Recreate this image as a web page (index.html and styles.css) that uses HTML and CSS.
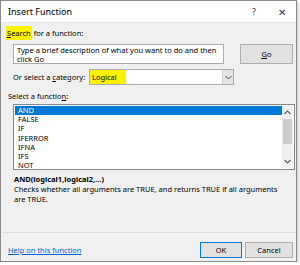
FILE: index.html
```html
<!DOCTYPE html>
<html lang="en">
<head>
    <meta charset="UTF-8">
    <title>Insert Function</title>
    <link rel="stylesheet" href="styles.css">
</head>
<body>

<div class="dialog">
    <div class="titlebar">
        <span class="title">Insert Function</span>
        <span class="tb-btn help">?</span>
        <span class="tb-btn close">&#x2715;</span>
    </div>

    <div class="body">
        <div class="label search-label"><span class="hl"><u>S</u>earch</span> for a function:</div>

        <div class="search-row">
            <div class="search-box">Type a brief description of what you want to do and then click Go</div>
            <button class="btn go"><u>G</u>o</button>
        </div>

        <div class="cat-row">
            <span class="label">Or select a <u>c</u>ategory:</span>
            <div class="combo">
                <span class="combo-value">Logical</span>
                <span class="combo-arrow">
                    <svg width="7" height="5" viewBox="0 0 7 5"><path d="M0.5 1 L3.5 4 L6.5 1" fill="none" stroke="#555" stroke-width="1"/></svg>
                </span>
            </div>
        </div>

        <div class="label list-label">Select a functio<u>n</u>:</div>

        <div class="listbox">
            <ul class="items">
                <li class="selected">AND</li>
                <li>FALSE</li>
                <li>IF</li>
                <li>IFERROR</li>
                <li>IFNA</li>
                <li>IFS</li>
                <li>NOT</li>
            </ul>
            <div class="scrollbar">
                <svg class="sb-arrow" width="7" height="5" viewBox="0 0 7 5"><path d="M0.5 4 L3.5 1 L6.5 4" fill="none" stroke="#606060" stroke-width="1.2"/></svg>
                <div class="sb-track"><div class="sb-thumb"></div></div>
                <svg class="sb-arrow" width="7" height="5" viewBox="0 0 7 5"><path d="M0.5 1 L3.5 4 L6.5 1" fill="none" stroke="#606060" stroke-width="1.2"/></svg>
            </div>
        </div>

        <div class="desc">
            <div class="syntax">AND(logical1,logical2,...)</div>
            <p>Checks whether all arguments are TRUE, and returns TRUE if all arguments are TRUE.</p>
        </div>

        <div class="footer">
            <a class="help-link" href="#">Help on this function</a>
            <div class="buttons">
                <button class="btn ok">OK</button>
                <button class="btn">Cancel</button>
            </div>
        </div>
    </div>
</div>

</body>
</html>
```

FILE: styles.css
```css
* {
    margin: 0;
    padding: 0;
    box-sizing: border-box;
}
body {
    background: #fff;
    font-family: 'Noto Sans', 'Open Sans', sans-serif;
    font-size: 7.5px;
    color: #000;
}
u {
    text-decoration: underline;
}
/* Window frame */
.dialog {
    width: 297px;
    height: 262px;
    border: 1px solid #8a8a8a;
    background: #f0f0f0;
    box-shadow: 1px 2px 3px rgba(0,0,0,0.25);
    display: flex;
    flex-direction: column;
}
.titlebar {
    height: 22px;
    background: #fff;
    display: flex;
    align-items: center;
    padding-left: 7px;
    border-bottom: 1px solid #e6e6e6;
}
.title {
    flex: 1;
    font-size: 9px;
}
.tb-btn {
    color: #333;
    font-size: 9px;
    text-align: center;
    width: 28px;
}
.close {
    font-size: 10px;
}
/* Body */
.body {
    flex: 1;
    display: flex;
    flex-direction: column;
    padding: 5px 3px 0 5px;
}
.label {
    line-height: 11px;
    white-space: nowrap;
}
.hl {
    background: #fff200;
    padding: 2px 1px;
}
.search-row {
    display: flex;
    margin: 5px 0 0 7px;
}
.search-box {
    width: 211px;
    height: 20px;
    background: #fff;
    border: 1px solid #ababab;
    padding: 1px 3px 0;
    line-height: 9px;
}
.btn {
    font-family: inherit;
    font-size: 7.5px;
    background: #e1e1e1;
    border: 1px solid #adadad;
    color: #000;
}
.go {
    width: 53px;
    height: 20px;
    margin-left: 16px;
}
.cat-row {
    display: flex;
    align-items: center;
    margin: 5px 0 0 7px;
}
.cat-row .label {
    width: 76px;
}
.combo {
    width: 145px;
    height: 16px;
    background: #fff;
    border: 1px solid #ababab;
    display: flex;
    align-items: stretch;
}
.combo-value {
    background: #fff200;
    width: 36px;
    padding-left: 2px;
    line-height: 14px;
}
.combo-arrow {
    margin-left: auto;
    width: 11px;
    background: #e5e5e5;
    border-left: 1px solid #d0d0d0;
    display: flex;
    align-items: center;
    justify-content: center;
}
.list-label {
    margin: 6px 0 0 2px;
}
.listbox {
    margin: 2px 0 0 7px;
    width: 282px;
    height: 66px;
    background: #fff;
    border: 1px solid #828790;
    display: flex;
    padding: 1px;
}
.items {
    list-style: none;
    flex: 1;
}
.items li {
    height: 9.2px;
    line-height: 9.2px;
    padding-left: 3px;
}
.items .selected {
    background: #0078d7;
    color: #fff;
}
.scrollbar {
    width: 11px;
    background: #f0f0f0;
    display: flex;
    flex-direction: column;
    align-items: center;
}
.sb-arrow {
    margin: 4px 0;
}
.sb-track {
    flex: 1;
    width: 100%;
    padding: 0 1px;
}
.sb-thumb {
    height: 25px;
    background: #cdcdcd;
}
.desc {
    margin: 4px 0 0 8px;
    line-height: 10px;
}
.syntax {
    font-weight: bold;
}
.desc p {
    width: 268px;
}
.footer {
    margin: auto -3px 0 -4px;
    border-top: 1px solid #dcdcdc;
    height: 29px;
    display: flex;
    align-items: center;
    padding: 6px 3px 0 6px;
}
.help-link {
    color: #0066cc;
    text-decoration: underline;
    flex: 1;
}
.buttons {
    display: flex;
    gap: 3px;
}
.buttons .btn {
    width: 48px;
    height: 16px;
}
.buttons .ok {
    border-color: #0078d7;
    width: 42px;
}
```
